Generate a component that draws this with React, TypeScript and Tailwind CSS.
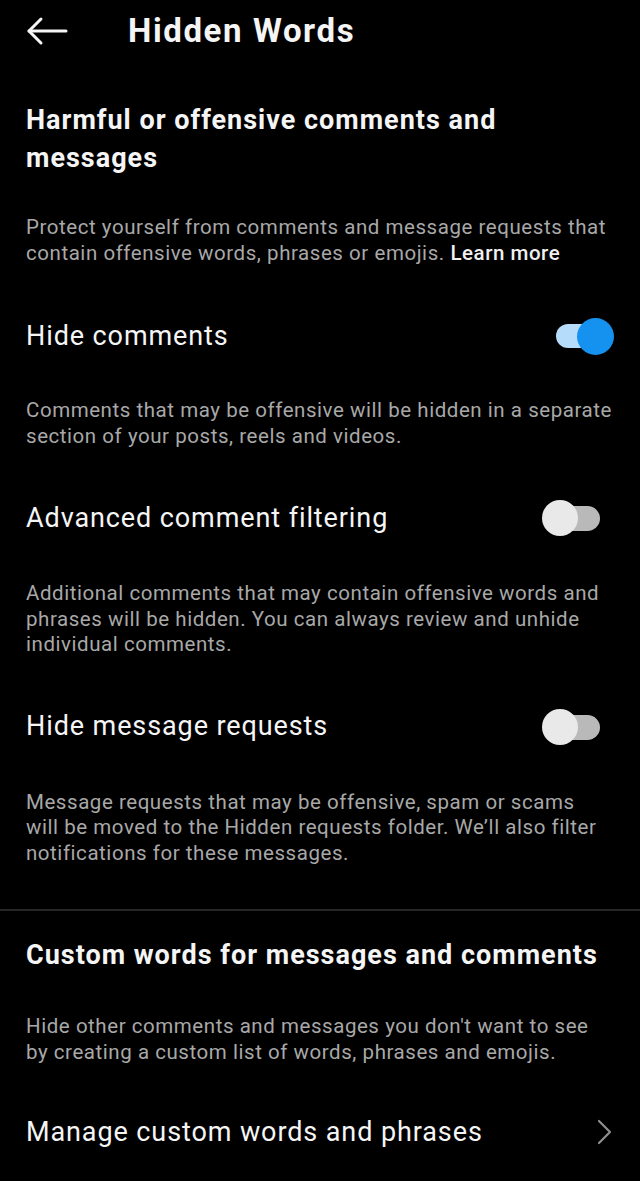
import { useState } from 'react';

function Toggle({ on, onChange }: { on: boolean; onChange: () => void }) {
  return (
    <button onClick={onChange} className="relative w-[74px] h-[40px] shrink-0">
      <span
        className={
          on
            ? 'absolute left-[16px] top-[8px] w-[52px] h-[24px] rounded-full bg-[#b5dcfb]'
            : 'absolute left-[7px] top-[8px] w-[53px] h-[25px] rounded-full bg-[#b9b9b9]'
        }
      />
      <span
        className={
          on
            ? 'absolute left-[37px] top-[2px] w-[37px] h-[37px] rounded-full bg-[#1591ef]'
            : 'absolute left-[2px] top-[2px] w-[36px] h-[36px] rounded-full bg-[#e9e9e9]'
        }
      />
    </button>
  );
}

function Desc({ lines, className = '', extra }: { lines: string[]; className?: string; extra?: React.ReactNode }) {
  return (
    <p className={`whitespace-nowrap text-[20.5px] tracking-[0.55px] leading-[25.5px] text-[#a8a8a8] ${className}`}>
      {lines.map((l, i) => (
        <span key={i} className="block">
          {l}
          {i === lines.length - 1 && extra}
        </span>
      ))}
    </p>
  );
}

function Label({ children }: { children: React.ReactNode }) {
  return <span className="text-[27px] tracking-[0.9px]">{children}</span>;
}

export default function App() {
  const [hideComments, setHideComments] = useState(true);
  const [advanced, setAdvanced] = useState(false);
  const [hideRequests, setHideRequests] = useState(false);

  return (
    <div
      className="min-h-[1181px] w-[640px] bg-black text-[#f5f5f5] overflow-hidden"
      style={{ fontFamily: 'Roboto, "Noto Sans", sans-serif' }}
    >
      {/* header */}
      <div className="h-[62px] flex items-center px-[26px]">
        <svg width="42" height="30" viewBox="0 0 42 30" fill="none" stroke="#f5f5f5" strokeWidth="3" strokeLinecap="round" strokeLinejoin="round">
          <path d="M40 15H3" />
          <path d="M15 3L3 15l12 12" />
        </svg>
        <h1 className="ml-[60px] text-[33px] font-bold tracking-[1.6px]">Hidden Words</h1>
      </div>

      <div className="px-[26px]">
        <h2 className="mt-[39px] text-[27px] tracking-[1px] leading-[38px] font-bold pr-[60px]">
          Harmful or offensive comments and messages
        </h2>
        <Desc
          className="mt-[38px]"
          lines={[
            'Protect yourself from comments and message requests that',
            'contain offensive words, phrases or emojis. ',
          ]}
          extra={<span className="text-[#f0f0f0] font-medium">Learn more</span>}
        />

        <div className="mt-[50px] h-[40px] flex items-center justify-between">
          <Label>Hide comments</Label>
          <Toggle on={hideComments} onChange={() => setHideComments(!hideComments)} />
        </div>
        <Desc
          className="mt-[42px]"
          lines={[
            'Comments that may be offensive will be hidden in a separate',
            'section of your posts, reels and videos.',
          ]}
        />

        <div className="mt-[49px] h-[40px] flex items-center justify-between">
          <Label>Advanced comment filtering</Label>
          <Toggle on={advanced} onChange={() => setAdvanced(!advanced)} />
        </div>
        <Desc
          className="mt-[43px]"
          lines={[
            'Additional comments that may contain offensive words and',
            'phrases will be hidden. You can always review and unhide',
            'individual comments.',
          ]}
        />

        <div className="mt-[49px] h-[40px] flex items-center justify-between">
          <Label>Hide message requests</Label>
          <Toggle on={hideRequests} onChange={() => setHideRequests(!hideRequests)} />
        </div>
        <Desc
          className="mt-[43px]"
          lines={[
            'Message requests that may be offensive, spam or scams',
            'will be moved to the Hidden requests folder. We’ll also filter',
            'notifications for these messages.',
          ]}
        />
      </div>

      <div className="mt-[43px] h-[2px] bg-[#262626]" />

      <div className="px-[26px]">
        <h2 className="mt-[25px] text-[27px] tracking-[1px] leading-[38px] font-bold">
          Custom words for messages and comments
        </h2>
        <Desc
          className="mt-[40px]"
          lines={[
            "Hide other comments and messages you don't want to see",
            'by creating a custom list of words, phrases and emojis.',
          ]}
        />
        <div className="mt-[47px] h-[40px] flex items-center justify-between">
          <Label>Manage custom words and phrases</Label>
          <svg width="16" height="26" viewBox="0 0 16 26" fill="none" stroke="#8e8e8e" strokeWidth="2.2" strokeLinecap="round" strokeLinejoin="round" className="mr-[2px]">
            <path d="M3 2l11 11L3 24" />
          </svg>
        </div>
      </div>
    </div>
  );
}
